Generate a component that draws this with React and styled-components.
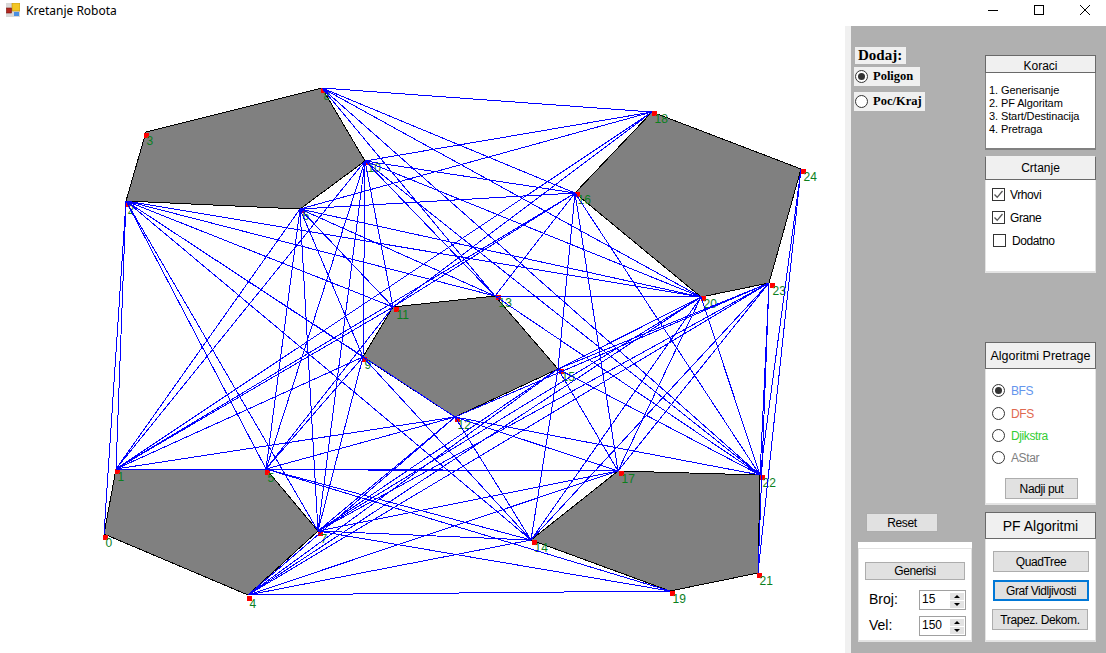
import React from 'react'
import styled, { createGlobalStyle } from 'styled-components'

const GlobalStyle = createGlobalStyle`
  html, body {
    margin: 0;
    padding: 0;
    background: #fff;
    overflow: hidden;
  }
  body {
    font-family: "Liberation Sans", Arial, sans-serif;
  }
`

// polygon corners as the program drew them, page coordinates
const V = [
  [104, 534], [116, 469], [126, 201], [146, 132], [248, 595], [266, 469],
  [300, 209], [318, 531], [322, 88], [363, 357], [365, 161], [393, 307],
  [455, 417], [495, 296], [531, 540], [558, 369], [575, 193], [618, 471],
  [652, 112], [670, 591], [701, 297], [758, 573], [760, 475], [769, 283],
  [801, 169],
]

// centre of the red marker for each vertex
const MARKS = [
  [105, 537], [117, 471], [127, 204], [146, 135], [249, 598], [267, 472],
  [302, 210], [320, 533], [323, 90], [364, 359], [367, 162], [396, 309],
  [457, 419], [498, 297], [534, 542], [561, 371], [577, 194], [621, 473],
  [654, 113], [672, 593], [703, 298], [759, 575], [762, 477], [772, 285],
  [803, 171],
]

const POLYGONS = [
  [0, 1, 5, 7, 4],
  [2, 3, 8, 10, 6],
  [9, 11, 13, 15, 12],
  [14, 17, 22, 21, 19],
  [16, 18, 24, 23, 20],
]

const BLOCKED = ['8-15', '10-15']

const isInside = (px, py, poly, margin) => {
  let sign = 0
  for (let i = 0; i < poly.length; i++) {
    const [ax, ay] = V[poly[i]]
    const [bx, by] = V[poly[(i + 1) % poly.length]]
    const len = Math.hypot(bx - ax, by - ay)
    const d = ((bx - ax) * (py - ay) - (by - ay) * (px - ax)) / len
    if (Math.abs(d) <= margin) return false
    if (sign === 0) sign = Math.sign(d)
    else if (Math.sign(d) !== sign) return false
  }
  return true
}

const isAdjacent = (a, b) =>
  POLYGONS.some((poly) => {
    const i = poly.indexOf(a)
    const j = poly.indexOf(b)
    if (i < 0 || j < 0) return false
    const diff = Math.abs(i - j)
    return diff === 1 || diff === poly.length - 1
  })

const isVisible = (a, b) => {
  if (isAdjacent(a, b) || BLOCKED.includes(`${a}-${b}`)) return false
  const [ax, ay] = V[a]
  const [bx, by] = V[b]
  const steps = Math.ceil(Math.hypot(bx - ax, by - ay))
  for (let s = 1; s < steps; s++) {
    const x = ax + ((bx - ax) * s) / steps
    const y = ay + ((by - ay) * s) / steps
    if (POLYGONS.some((poly) => isInside(x, y, poly, 0.6))) return false
  }
  return true
}

const EDGES = []
V.forEach((_, a) => {
  for (let b = a + 1; b < V.length; b++) {
    if (isVisible(a, b)) EDGES.push([a, b])
  }
})

const Page = styled.div`
  width: 1106px;
  height: 653px;
  display: flex;
  flex-direction: column;
  background: #fff;
  overflow: hidden;
`

const TitleBar = styled.div`
  height: 26px;
  flex: none;
  display: flex;
  align-items: center;
  padding-left: 6px;
  box-sizing: border-box;
`

const IconSlot = styled.div`
  margin-top: -6px;
  svg {
    display: block;
  }
`

const TitleText = styled.span`
  font-family: "Noto Sans", sans-serif;
  font-size: 12px;
  margin-left: 6px;
  margin-top: -5px;
  color: #000;
`

const WindowButtons = styled.div`
  margin-left: auto;
  margin-right: -2px;
  display: flex;
  margin-top: -6px;
`

const WindowButton = styled.div`
  width: 46px;
  height: 20px;
  display: flex;
  align-items: center;
  justify-content: center;
  svg {
    display: block;
  }
`

const Main = styled.div`
  flex: 1;
  display: flex;
  min-height: 0;
`

const Canvas = styled.svg`
  width: 845px;
  height: 627px;
  flex: none;
  display: block;
`

const VertexLabel = styled.text`
  font-family: "Liberation Sans", Arial, sans-serif;
  font-size: 12px;
  fill: #0b7f1e;
`

const Sidebar = styled.div`
  flex: 1;
  display: flex;
  background: #b0b0b0;
  border-left: 6px solid #f0f0f0;
`

const LeftColumn = styled.div`
  width: 134px;
  flex: none;
  display: flex;
  flex-direction: column;
  align-items: flex-start;
  padding-top: 21px;
  box-sizing: border-box;
`

const RightColumn = styled.div`
  width: 111px;
  flex: none;
  display: flex;
  flex-direction: column;
  padding-top: 29px;
`

const AddTitle = styled.div`
  width: 51px;
  height: 17px;
  margin-left: 4px;
  background: #f0f0f0;
  font-family: "Liberation Serif", serif;
  font-weight: bold;
  font-size: 15px;
  line-height: 17px;
  padding-left: 3px;
  box-sizing: border-box;
  color: #000;
`

const AddOption = styled.div`
  display: flex;
  align-items: center;
  width: ${({ $w }) => $w}px;
  height: 19px;
  margin-left: 3px;
  margin-top: ${({ $top }) => $top}px;
  background: #f0f0f0;
  font-family: "Liberation Serif", serif;
  font-weight: bold;
  font-size: 12.5px;
  color: #000;
`

const RadioMark = styled.span`
  width: 13px;
  height: 13px;
  flex: none;
  box-sizing: border-box;
  border: 1px solid #333;
  border-radius: 50%;
  background: #fff;
  display: flex;
  align-items: center;
  justify-content: center;
  margin-left: ${({ $left }) => $left || 0}px;
  margin-right: ${({ $right }) => $right || 0}px;
  &::after {
    content: '';
    width: 7px;
    height: 7px;
    border-radius: 50%;
    background: ${({ $checked }) => ($checked ? '#333' : 'transparent')};
  }
`

const CheckMark = styled.span`
  width: 13px;
  height: 13px;
  flex: none;
  box-sizing: border-box;
  border: 1px solid #333;
  background: #fff;
  display: block;
  margin-right: ${({ $right }) => $right}px;
  svg {
    display: block;
  }
`

const GroupBox = styled.div`
  height: ${({ $h }) => $h}px;
  margin-top: ${({ $top }) => $top || 0}px;
  display: flex;
  flex-direction: column;
  background: #fff;
  box-sizing: border-box;
  border-bottom: 2px solid ${({ $dark }) => ($dark ? '#808080' : '#e3e3e3')};
`

const GroupHeader = styled.div`
  height: ${({ $h }) => $h}px;
  flex: none;
  box-sizing: border-box;
  background: #f0f0f0;
  border: 1px solid #696969;
  border-top-color: ${({ $openTop }) => ($openTop ? '#f0f0f0' : '#696969')};
  padding-top: ${({ $pad }) => $pad || 0}px;
  display: flex;
  align-items: center;
  justify-content: center;
  font-size: ${({ $size }) => $size || 12}px;
  color: #000;
`

const GroupBody = styled.div`
  flex: 1;
  box-sizing: border-box;
  border-left: 1px solid ${({ $dark }) => ($dark ? '#808080' : '#e3e3e3')};
  border-right: 1px solid ${({ $dark }) => ($dark ? '#808080' : '#e3e3e3')};
  padding-top: ${({ $top }) => $top}px;
`

const StepLine = styled.div`
  font-size: 11px;
  line-height: 13px;
  letter-spacing: -0.1px;
  padding-left: 3px;
  color: #000;
`

const OptionRow = styled.div`
  height: ${({ $h }) => $h || 23}px;
  display: flex;
  align-items: center;
  padding-left: ${({ $left }) => $left}px;
  font-size: 12px;
  letter-spacing: -0.4px;
  color: ${({ $color }) => $color || '#000'};
`

const Button = styled.div`
  box-sizing: border-box;
  width: ${({ $w }) => $w}px;
  height: ${({ $h }) => $h}px;
  margin-left: ${({ $left }) => $left}px;
  margin-top: ${({ $top }) => $top || 0}px;
  display: flex;
  align-items: center;
  justify-content: center;
  background: #e1e1e1;
  border: ${({ $focused }) => ($focused ? '2px solid #0078d7' : '1px solid #adadad')};
  font-size: 12px;
  letter-spacing: -0.4px;
  color: #000;
`

const GeneratorBox = styled.div`
  width: 114px;
  height: 100px;
  margin-left: 7px;
  margin-top: 10px;
  box-sizing: border-box;
  background: #fff;
  padding-top: 6px;
  border-bottom: 2px solid #e3e3e3;
`

const GeneratorInner = styled.div`
  height: 92px;
  box-sizing: border-box;
  border-top: 1px solid #e3e3e3;
  border-left: 1px solid #e3e3e3;
  border-right: 1px solid #e3e3e3;
  padding-top: 13px;
`

const SpinRow = styled.div`
  display: flex;
  align-items: center;
  height: 20px;
  margin-top: ${({ $top }) => $top}px;
  padding-left: ${({ $left }) => $left}px;
`

const SpinLabel = styled.span`
  width: ${({ $w }) => $w}px;
  font-size: 14px;
  margin-top: -2px;
  color: #000;
`

const SpinBox = styled.div`
  width: 47px;
  height: 20px;
  box-sizing: border-box;
  border: 1px solid #a0a0a0;
  display: flex;
  align-items: center;
  padding-left: 2px;
  padding-bottom: 2px;
  font-size: 12px;
  color: #000;
`

const SpinButtons = styled.div`
  margin-left: auto;
  margin-right: 1px;
  margin-bottom: -2px;
  width: 14px;
  display: flex;
  flex-direction: column;
  gap: 1px;
`

const SpinButton = styled.div`
  height: 7px;
  background: #e3e3e3;
  display: flex;
  align-items: center;
  justify-content: center;
  &::after {
    content: '';
    width: 0;
    height: 0;
    border-left: 3px solid transparent;
    border-right: 3px solid transparent;
    border-${({ $down }) => ($down ? 'top' : 'bottom')}: 3px solid #000;
  }
`

const Spinner = ({ value }) => (
  <SpinBox>
    {value}
    <SpinButtons>
      <SpinButton />
      <SpinButton $down />
    </SpinButtons>
  </SpinBox>
)

const Check = ({ checked, right }) => (
  <CheckMark $right={right}>
    {checked && (
      <svg width="11" height="11" viewBox="0 0 11 11">
        <path d="M1.5 5.5 L4.2 8.3 L9.5 2" fill="none" stroke="#555" strokeWidth="1.3" />
      </svg>
    )}
  </CheckMark>
)

const AppIcon = () => (
  <svg width="14" height="14" viewBox="0 0 14 14">
    <rect x="0" y="0" width="14" height="14" fill="#d8d8d8" />
    <rect x="6" y="0" width="8" height="8" fill="#f3c623" stroke="#b88a10" strokeWidth="0.6" />
    <rect x="0.5" y="5" width="5" height="5" fill="#b3261e" stroke="#7a1410" strokeWidth="0.6" />
    <rect x="8" y="9" width="5" height="4" fill="#4a8fe0" />
  </svg>
)

const Graph = () => (
  <Canvas viewBox="0 26 845 627">
    {POLYGONS.map((poly) => (
      <polygon
        key={poly[0]}
        points={poly.map((i) => V[i].join(',')).join(' ')}
        fill="#808080"
        stroke="#000"
        shapeRendering="crispEdges"
      />
    ))}
    {MARKS.map(([x, y], i) => (
      <rect key={i} x={x - 2} y={y - 2} width="5" height="5" fill="#ff0000" />
    ))}
    {MARKS.map(([x, y], i) => (
      <VertexLabel key={i} x={x + 0.5} y={y + 10}>
        {i}
      </VertexLabel>
    ))}
    {EDGES.map(([a, b]) => (
      <line
        key={`${a}-${b}`}
        x1={V[a][0]}
        y1={V[a][1]}
        x2={V[b][0]}
        y2={V[b][1]}
        stroke="#0000ff"
        strokeWidth="1"
        shapeRendering="crispEdges"
      />
    ))}
  </Canvas>
)

export default function App() {
  return (
    <Page>
      <GlobalStyle />
      <TitleBar>
        <IconSlot>
          <AppIcon />
        </IconSlot>
        <TitleText>Kretanje Robota</TitleText>
        <WindowButtons>
          <WindowButton>
            <svg width="10" height="10" viewBox="0 0 10 10">
              <path d="M0 5.5 H10" stroke="#000" fill="none" />
            </svg>
          </WindowButton>
          <WindowButton>
            <svg width="10" height="10" viewBox="0 0 10 10">
              <rect x="0.5" y="0.5" width="9" height="9" stroke="#000" fill="none" />
            </svg>
          </WindowButton>
          <WindowButton>
            <svg width="10" height="10" viewBox="0 0 10 10">
              <path d="M0 0 L10 10 M10 0 L0 10" stroke="#000" fill="none" />
            </svg>
          </WindowButton>
        </WindowButtons>
      </TitleBar>
      <Main>
        <Graph />
        <Sidebar>
          <LeftColumn>
            <AddTitle>Dodaj:</AddTitle>
            <AddOption $w={66} $top={3}>
              <RadioMark $checked $left={1} $right={5} />
              Poligon
            </AddOption>
            <AddOption $w={71} $top={6}>
              <RadioMark $left={1} $right={5} />
              Poc/Kraj
            </AddOption>
            <Button $w={72} $h={19} $left={15} $top={402}>Reset</Button>
            <GeneratorBox>
              <GeneratorInner>
                <Button $w={100} $h={18} $left={6}>Generisi</Button>
                <SpinRow $top={10} $left={10}>
                  <SpinLabel $w={50}>Broj:</SpinLabel>
                  <Spinner value="15" />
                </SpinRow>
                <SpinRow $top={6} $left={10}>
                  <SpinLabel $w={50}>Vel:</SpinLabel>
                  <Spinner value="150" />
                </SpinRow>
              </GeneratorInner>
            </GeneratorBox>
          </LeftColumn>
          <RightColumn>
            <GroupBox $h={95} $dark>
              <GroupHeader $h={18} $pad={3}>Koraci</GroupHeader>
              <GroupBody $top={11} $dark>
                <StepLine>1. Generisanje</StepLine>
                <StepLine>2. PF Algoritam</StepLine>
                <StepLine>3. Start/Destinacija</StepLine>
                <StepLine>4. Pretraga</StepLine>
              </GroupBody>
            </GroupBox>
            <GroupBox $h={117} $top={6}>
              <GroupHeader $h={24} $openTop>Crtanje</GroupHeader>
              <GroupBody $top={3}>
                <OptionRow $left={6}><Check checked right={5} />Vrhovi</OptionRow>
                <OptionRow $left={6}><Check checked right={5} />Grane</OptionRow>
                <OptionRow $left={7}><Check right={6} />Dodatno</OptionRow>
              </GroupBody>
            </GroupBox>
            <GroupBox $h={163} $top={69}>
              <GroupHeader $h={27} $size={12.5}>Algoritmi Pretrage</GroupHeader>
              <GroupBody $top={10}>
                <OptionRow $left={6} $color="#6495ed"><RadioMark $checked $right={6} />BFS</OptionRow>
                <OptionRow $left={6} $color="#e0694f"><RadioMark $right={6} />DFS</OptionRow>
                <OptionRow $left={6} $h={21} $color="#32cd32"><RadioMark $right={6} />Djikstra</OptionRow>
                <OptionRow $left={6} $color="#808080"><RadioMark $right={6} />AStar</OptionRow>
                <Button $w={73} $h={21} $left={19} $top={9}>Nadji put</Button>
              </GroupBody>
            </GroupBox>
            <GroupBox $h={130} $top={7}>
              <GroupHeader $h={27} $size={14}>PF Algoritmi</GroupHeader>
              <GroupBody $top={12}>
                <Button $w={96} $h={21} $left={7}>QuadTree</Button>
                <Button $w={96} $h={21} $left={7} $top={8} $focused>Graf Vidljivosti</Button>
                <Button $w={96} $h={21} $left={6} $top={8}>Trapez. Dekom.</Button>
              </GroupBody>
            </GroupBox>
          </RightColumn>
        </Sidebar>
      </Main>
    </Page>
  )
}
